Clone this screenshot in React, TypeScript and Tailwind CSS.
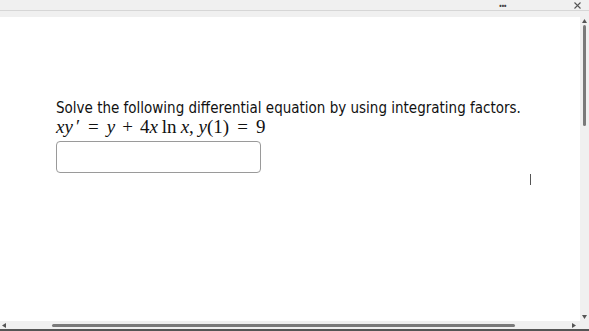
import React from 'react';

function TopBars() {
  return (
    <div className="shrink-0">
      <div className="flex h-[10px] items-center justify-end bg-[#f0f0f0] pr-[8px]">
        <span className="mr-[68px] text-[9px] leading-none tracking-[-1px] text-[#444]">•••</span>
        <svg width="7" height="7" viewBox="0 0 7 7" className="text-[#555]">
          <path d="M0.5 0.5 L6.5 6.5 M6.5 0.5 L0.5 6.5" stroke="currentColor" strokeWidth="1.1" />
        </svg>
      </div>
      <div className="h-px bg-[#d6d6d6]" />
      <div className="h-[6px] bg-[#f0f0f0]" />
    </div>
  );
}

function Math() {
  const serif = { fontFamily: '"Liberation Serif", "DejaVu Serif", serif' };
  return (
    <div className="text-[19px] leading-[20px] text-[#111]" style={serif}>
      <i>xy</i>
      <span className="ml-[3px]">′</span>
      <span className="mx-[8px]">=</span>
      <i>y</i>
      <span className="mx-[7px]">+</span>
      <span>4</span>
      <i>x</i>
      <span className="ml-[4px]">ln</span>
      <i className="ml-[4px]">x</i>
      <span>, </span>
      <i>y</i>
      <span>(1)</span>
      <span className="mx-[8px]">=</span>
      <span>9</span>
    </div>
  );
}

export default function App() {
  return (
    <div className="flex h-[331px] w-[589px] flex-col overflow-hidden bg-white">
      <TopBars />
      <div className="flex min-h-0 flex-1">
        <main className="relative min-w-0 flex-1 bg-white">
          <div className="pl-[56px] pt-[82px]">
            <p
              className="text-[15px] leading-[18px] text-[#111]"
              style={{ fontFamily: '"DejaVu Sans Condensed", "DejaVu Sans", Verdana, sans-serif' }}
            >
              Solve the following differential equation by using integrating factors.
            </p>
            <Math />
            <div className="mt-[4px] h-[32px] w-[205px] rounded-[4px] border border-[#9a9a9a] bg-white" />
          </div>
          <div className="absolute left-[530px] top-[157px] h-[11px] w-px bg-[#555]" />
        </main>
        <aside className="flex w-[9px] shrink-0 flex-col items-center bg-[#f0f0f0]">
          <svg width="5" height="4" viewBox="0 0 5 4" className="mt-[2px] text-[#555]">
            <path d="M2.5 0 L5 4 L0 4 Z" fill="currentColor" />
          </svg>
          <div className="mt-[2px] h-[101px] w-[3px] rounded-full bg-[#7a7a7a]" />
          <div className="flex-1" />
          <svg width="5" height="4" viewBox="0 0 5 4" className="mb-[2px] text-[#555]">
            <path d="M0 0 L5 0 L2.5 4 Z" fill="currentColor" />
          </svg>
        </aside>
      </div>
      <div className="flex h-[8px] shrink-0 items-center bg-[#f0f0f0]">
        <svg width="4" height="5" viewBox="0 0 4 5" className="ml-[2px] text-[#555]">
          <path d="M0 2.5 L4 0 L4 5 Z" fill="currentColor" />
        </svg>
        <div className="ml-[46px] h-[3px] w-[463px] rounded-full bg-[#7a7a7a]" />
        <div className="flex-1" />
        <svg width="4" height="5" viewBox="0 0 4 5" className="mr-[13px] text-[#555]">
          <path d="M0 0 L4 2.5 L0 5 Z" fill="currentColor" />
        </svg>
      </div>
      <div className="h-[2px] shrink-0 bg-[#555]" />
    </div>
  );
}
